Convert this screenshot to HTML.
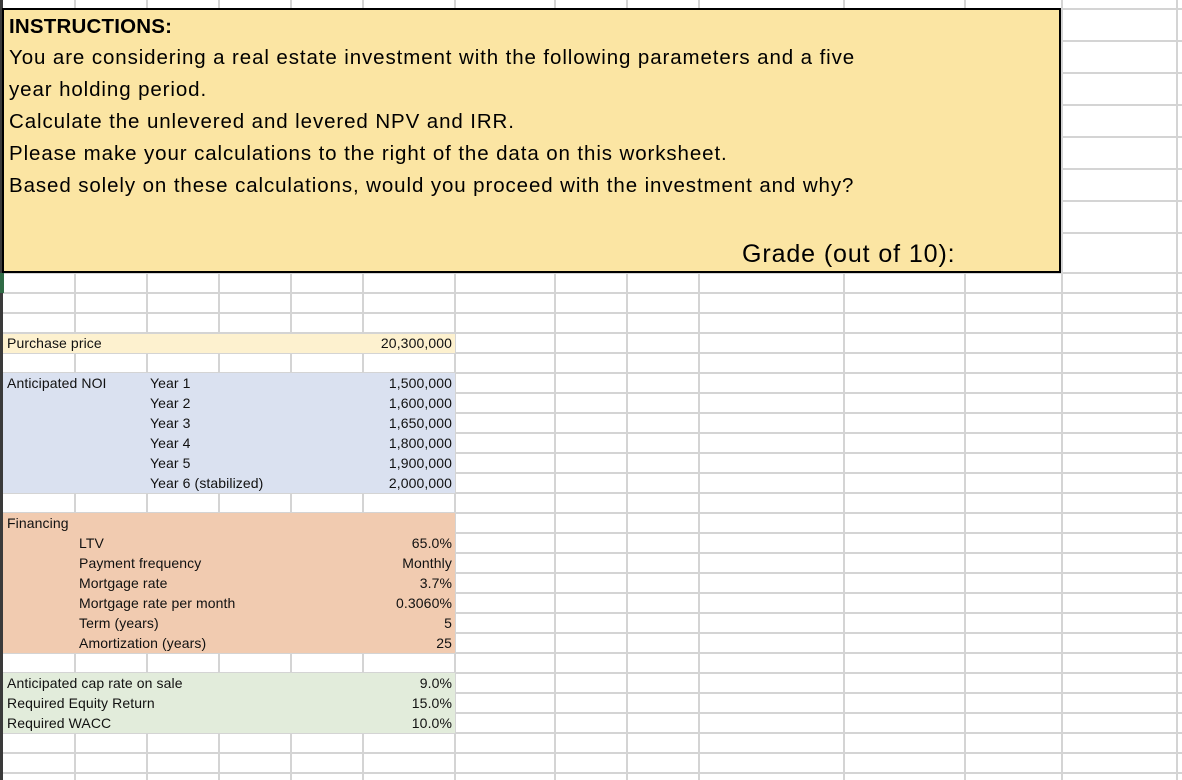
<!DOCTYPE html>
<html><head><meta charset="utf-8"><style>
html,body{margin:0;padding:0;background:#fff;}
body{width:1182px;height:780px;position:relative;overflow:hidden;font-family:"Liberation Sans",sans-serif;}
.a{position:absolute;white-space:nowrap;}
.s{font-size:14px;letter-spacing:0.1px;color:#111;line-height:20px;}
.r{text-align:right;width:200px;}
.big{font-size:20.5px;letter-spacing:0.9px;color:#000;line-height:32px;left:9px;}
</style></head><body>
<svg class="a" style="left:0;top:0" width="1182" height="780">
<g stroke="#d4d4d4" stroke-width="2">
<line x1="0" y1="9" x2="1182" y2="9"/>
<line x1="0" y1="41" x2="1182" y2="41"/><line x1="0" y1="73" x2="1182" y2="73"/>
<line x1="0" y1="105" x2="1182" y2="105"/><line x1="0" y1="137" x2="1182" y2="137"/>
<line x1="0" y1="169" x2="1182" y2="169"/><line x1="0" y1="201" x2="1182" y2="201"/>
<line x1="0" y1="233" x2="1182" y2="233"/><line x1="0" y1="273" x2="1182" y2="273"/>
<line x1="0" y1="293" x2="1182" y2="293"/><line x1="0" y1="313" x2="1182" y2="313"/>
<line x1="0" y1="333" x2="1182" y2="333"/><line x1="0" y1="353" x2="1182" y2="353"/>
<line x1="0" y1="373" x2="1182" y2="373"/><line x1="0" y1="393" x2="1182" y2="393"/>
<line x1="0" y1="413" x2="1182" y2="413"/><line x1="0" y1="433" x2="1182" y2="433"/>
<line x1="0" y1="453" x2="1182" y2="453"/><line x1="0" y1="473" x2="1182" y2="473"/>
<line x1="0" y1="493" x2="1182" y2="493"/><line x1="0" y1="513" x2="1182" y2="513"/>
<line x1="0" y1="533" x2="1182" y2="533"/><line x1="0" y1="553" x2="1182" y2="553"/>
<line x1="0" y1="573" x2="1182" y2="573"/><line x1="0" y1="593" x2="1182" y2="593"/>
<line x1="0" y1="613" x2="1182" y2="613"/><line x1="0" y1="633" x2="1182" y2="633"/>
<line x1="0" y1="653" x2="1182" y2="653"/><line x1="0" y1="673" x2="1182" y2="673"/>
<line x1="0" y1="693" x2="1182" y2="693"/><line x1="0" y1="713" x2="1182" y2="713"/>
<line x1="0" y1="733" x2="1182" y2="733"/><line x1="0" y1="753" x2="1182" y2="753"/>
<line x1="0" y1="773" x2="1182" y2="773"/>
<line x1="75" y1="0" x2="75" y2="780"/><line x1="147" y1="0" x2="147" y2="780"/>
<line x1="219" y1="0" x2="219" y2="780"/><line x1="291" y1="0" x2="291" y2="780"/>
<line x1="363" y1="0" x2="363" y2="780"/><line x1="455" y1="0" x2="455" y2="780"/>
<line x1="555" y1="0" x2="555" y2="780"/><line x1="627" y1="0" x2="627" y2="780"/>
<line x1="699" y1="0" x2="699" y2="780"/><line x1="844" y1="0" x2="844" y2="780"/>
<line x1="965" y1="0" x2="965" y2="780"/><line x1="1062" y1="0" x2="1062" y2="780"/>
<line x1="1177" y1="0" x2="1177" y2="780"/>
</g>
<rect x="0" y="0" width="3" height="780" fill="#3a3a3a"/>
<rect x="0" y="273" width="4" height="20" fill="#2f6b45"/>
<rect x="3" y="334" width="452" height="19" fill="#fdf1cf"/>
<rect x="3" y="373" width="452" height="120" fill="#dae1f0"/>
<rect x="3" y="513" width="452" height="140" fill="#f1cbb0"/>
<rect x="3" y="673" width="452" height="60" fill="#e2ecdb"/>
<rect x="3" y="9" width="1057" height="263" fill="#fbe5a3" stroke="#000" stroke-width="2"/>
</svg>
<div class="a big" style="top:11px;font-weight:bold;letter-spacing:0.2px;">INSTRUCTIONS:</div>
<div class="a big" style="top:42px;">You are considering a real estate investment with the following parameters and a five</div>
<div class="a big" style="top:74px;">year holding period.</div>
<div class="a big" style="top:106px;">Calculate the unlevered and levered NPV and IRR.</div>
<div class="a big" style="top:138px;">Please make your calculations to the right of the data on this worksheet.</div>
<div class="a big" style="top:170px;">Based solely on these calculations, would you proceed with the investment and why?</div>
<div class="a" style="left:742px;top:237px;font-size:25px;letter-spacing:0.9px;line-height:34px;color:#000;">Grade (out of 10):</div>

<div class="a s" style="left:7px;top:333px;">Purchase price</div>
<div class="a s r" style="left:252px;top:333px;">20,300,000</div>

<div class="a s" style="left:7px;top:373px;">Anticipated NOI</div>
<div class="a s" style="left:150px;top:373px;">Year 1</div>
<div class="a s" style="left:150px;top:393px;">Year 2</div>
<div class="a s" style="left:150px;top:413px;">Year 3</div>
<div class="a s" style="left:150px;top:433px;">Year 4</div>
<div class="a s" style="left:150px;top:453px;">Year 5</div>
<div class="a s" style="left:150px;top:473px;">Year 6 (stabilized)</div>
<div class="a s r" style="left:252px;top:373px;">1,500,000</div>
<div class="a s r" style="left:252px;top:393px;">1,600,000</div>
<div class="a s r" style="left:252px;top:413px;">1,650,000</div>
<div class="a s r" style="left:252px;top:433px;">1,800,000</div>
<div class="a s r" style="left:252px;top:453px;">1,900,000</div>
<div class="a s r" style="left:252px;top:473px;">2,000,000</div>

<div class="a s" style="left:7px;top:513px;">Financing</div>
<div class="a s" style="left:79px;top:533px;">LTV</div>
<div class="a s" style="left:79px;top:553px;">Payment frequency</div>
<div class="a s" style="left:79px;top:573px;">Mortgage rate</div>
<div class="a s" style="left:79px;top:593px;">Mortgage rate per month</div>
<div class="a s" style="left:79px;top:613px;">Term (years)</div>
<div class="a s" style="left:79px;top:633px;">Amortization (years)</div>
<div class="a s r" style="left:252px;top:533px;">65.0%</div>
<div class="a s r" style="left:252px;top:553px;">Monthly</div>
<div class="a s r" style="left:252px;top:573px;">3.7%</div>
<div class="a s r" style="left:252px;top:593px;">0.3060%</div>
<div class="a s r" style="left:252px;top:613px;">5</div>
<div class="a s r" style="left:252px;top:633px;">25</div>

<div class="a s" style="left:7px;top:673px;">Anticipated cap rate on sale</div>
<div class="a s" style="left:7px;top:693px;">Required Equity Return</div>
<div class="a s" style="left:7px;top:713px;">Required WACC</div>
<div class="a s r" style="left:252px;top:673px;">9.0%</div>
<div class="a s r" style="left:252px;top:693px;">15.0%</div>
<div class="a s r" style="left:252px;top:713px;">10.0%</div>
</body></html>
